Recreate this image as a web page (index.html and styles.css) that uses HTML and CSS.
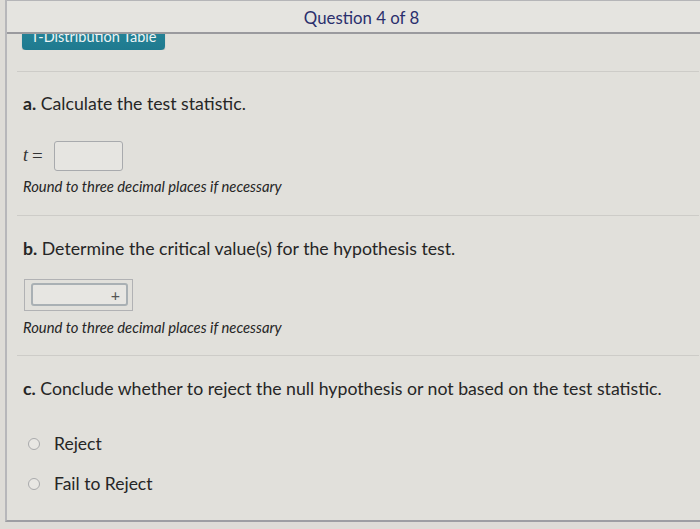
FILE: index.html
```html
<!DOCTYPE html>
<html>
<head>
<meta charset="utf-8">
<link rel="stylesheet" href="styles.css">
</head>
<body>
<div class="frame">
  <header class="topbar">
    <div class="title">Question 4 of 8</div>
  </header>
  <div class="tool-strip">
    <div class="tool-btn">T-Distribution Table</div>
  </div>
  <main class="content">
    <section class="part part-a">
      <h2 class="prompt"><b>a.</b> Calculate the test statistic.</h2>
      <div class="eq-row">
        <span class="var">t</span><span class="eq">=</span><span class="input-box"></span>
      </div>
      <p class="hint">Round to three decimal places if necessary</p>
    </section>
    <section class="part part-b">
      <h2 class="prompt"><b>b.</b> Determine the critical value(s) for the hypothesis test.</h2>
      <div class="multi-box">
        <div class="multi-inner"><span class="plus">+</span></div>
      </div>
      <p class="hint">Round to three decimal places if necessary</p>
    </section>
    <section class="part part-c">
      <h2 class="prompt"><b>c.</b> Conclude whether to reject the null hypothesis or not based on the test statistic.</h2>
      <div class="choices">
        <label class="choice"><span class="radio"></span>Reject</label>
        <label class="choice"><span class="radio"></span>Fail to Reject</label>
      </div>
    </section>
  </main>
</div>
</body>
</html>
```
FILE: styles.css
```css
html, body {
  margin: 0;
  padding: 0;
}
body {
  background: #dedcd7;
  font-family: Lato, "Open Sans", sans-serif;
  color: #2c2c2c;
  width: 700px;
  height: 529px;
  overflow: hidden;
}
.frame {
  margin-left: 5px;
  width: 705px;
  height: 520px;
  border-left: 2px solid #b7b7ba;
  border-bottom: 2px solid #9d9ea3;
  background: #e1e0db;
}
.topbar {
  box-sizing: border-box;
  height: 34px;
  border-top: 1px solid #b5b5b8;
  border-bottom: 2px solid #9a9a9e;
  background: #e5e4e0;
  display: flex;
  align-items: center;
  justify-content: center;
  padding-left: 4px;
}
.title {
  font-size: 16.8px;
  color: #2a2f6d;
  margin-top: 2px;
}
.tool-strip {
  height: 16px;
  overflow: hidden;
  padding-left: 15px;
}
.tool-btn {
  display: block;
  width: 143px;
  height: 36px;
  margin-top: -20px;
  box-sizing: border-box;
  background: linear-gradient(#2a8a9e, #1f7a8f);
  border-radius: 0 0 4px 4px;
  color: #eef4f5;
  font-size: 14.5px;
  line-height: 20px;
  padding-top: 13px;
  text-align: center;
  box-shadow: 0 1px 1px rgba(0,0,0,0.25);
}
.content {
  margin-top: 21px;
  padding: 0 13px 0 10px;
}
.part {
  border-top: 1px solid #cdccc8;
  padding-left: 6px;
}
.prompt {
  margin: 0;
  font-weight: normal;
  font-size: 17.7px;
  line-height: 24px;
  color: #262626;
}
.prompt b {
  font-weight: bold;
}
.part-a {
  padding-top: 20px;
  height: 123px;
}
.eq-row {
  display: flex;
  align-items: center;
  margin-top: 24px;
  height: 31px;
}
.var {
  font-family: "Liberation Serif", serif;
  font-style: italic;
  font-size: 18px;
  color: #333;
}
.eq {
  font-family: "Liberation Serif", serif;
  font-size: 19px;
  margin-left: 4px;
  color: #333;
}
.input-box {
  display: inline-block;
  width: 69px;
  height: 30px;
  box-sizing: border-box;
  margin-left: 11px;
  border: 1.5px solid #a8aaad;
  border-radius: 3px;
  background: #e6e5e1;
}
.hint {
  margin: 5px 0 0;
  font-style: italic;
  font-size: 14.8px;
  line-height: 20px;
  color: #252525;
}
.part-b {
  padding-top: 21px;
  height: 118px;
}
.multi-box {
  margin-top: 18px;
  margin-left: 1px;
  width: 109px;
  height: 32px;
  box-sizing: border-box;
  border: 1px solid #b1b2b4;
  padding: 3px 4px 4px 6px;
}
.multi-inner {
  height: 23px;
  box-sizing: border-box;
  border: 2px solid #a9b0b4;
  border-radius: 3px;
  background: #e7e6e2;
  display: flex;
  align-items: center;
  justify-content: flex-end;
  padding-right: 6px;
}
.plus {
  font-size: 16px;
  line-height: 16px;
  color: #555;
}
.part-b .hint {
  margin-top: 6px;
}
.part-c {
  padding-top: 21px;
}
.choices {
  margin-top: 31px;
  display: flex;
  flex-direction: column;
  gap: 16px;
}
.choice {
  display: flex;
  align-items: center;
  font-size: 17.5px;
  line-height: 24px;
  color: #262626;
}
.radio {
  width: 12px;
  height: 12px;
  box-sizing: border-box;
  border: 1px solid #a9aaac;
  border-radius: 50%;
  background: #e8e7e3;
  margin-left: 5px;
  margin-right: 14px;
}
```
